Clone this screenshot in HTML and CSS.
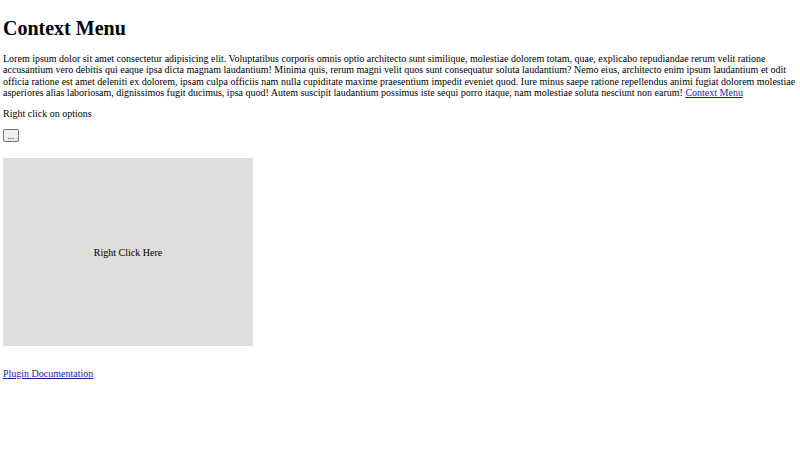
FILE: index.html
```html
<!DOCTYPE html>
<html>
<head>
<meta charset="utf-8">
<title>Context Menu</title>
<link rel="stylesheet" href="styles.css">
</head>
<body>
<h1 class="title">Context Menu</h1>
<p class="text">Lorem ipsum dolor sit amet consectetur adipisicing elit. Voluptatibus corporis omnis optio architecto sunt similique, molestiae dolorem totam, quae, explicabo repudiandae rerum velit ratione accusantium vero debitis qui eaque ipsa dicta magnam laudantium! Minima quis, rerum magni velit quos sunt consequatur soluta laudantium? Nemo eius, architecto enim ipsum laudantium et odit officia ratione est amet deleniti ex dolorem, ipsam culpa officiis nam nulla cupiditate maxime praesentium impedit eveniet quod. Iure minus saepe ratione repellendus animi fugiat dolorem molestiae asperiores alias laboriosam, dignissimos fugit ducimus, ipsa quod! Autem suscipit laudantium possimus iste sequi porro itaque, nam molestiae soluta nesciunt non earum! <a class="link" href="#">Context Menu</a></p>
<p class="text">Right click on options</p>
<button class="btn">...</button>
<div class="area">Right Click Here</div>
<p class="text doc"><a class="link" href="#">Plugin Documentation</a></p>
</body>
</html>
```
FILE: styles.css
```css
html, body {
  background: #fff;
}
body {
  margin: 0;
  padding: 3px;
  font-family: "Liberation Serif", "Times New Roman", serif;
  color: #000;
}
.title {
  font-size: 20px;
  font-weight: bold;
  line-height: 23px;
  margin: 14px 0 13px;
}
.text {
  font-size: 10px;
  line-height: 11.3px;
  margin: 10px 0;
}
.link {
  color: #1c1cb4;
}
.btn {
  display: block;
  font-family: "Liberation Sans", Arial, sans-serif;
  font-size: 8.3px;
  line-height: 10px;
  height: 13px;
  padding: 0 3.5px;
  margin: 0;
  background: #efefef;
  border: 1px solid #767676;
  border-radius: 2px;
  color: #000;
}
.area {
  width: 250px;
  height: 187.5px;
  margin-top: 16px;
  background: #dddddd;
  font-size: 10px;
  display: flex;
  align-items: center;
  justify-content: center;
}
.doc {
  margin-top: 22px;
}
```
